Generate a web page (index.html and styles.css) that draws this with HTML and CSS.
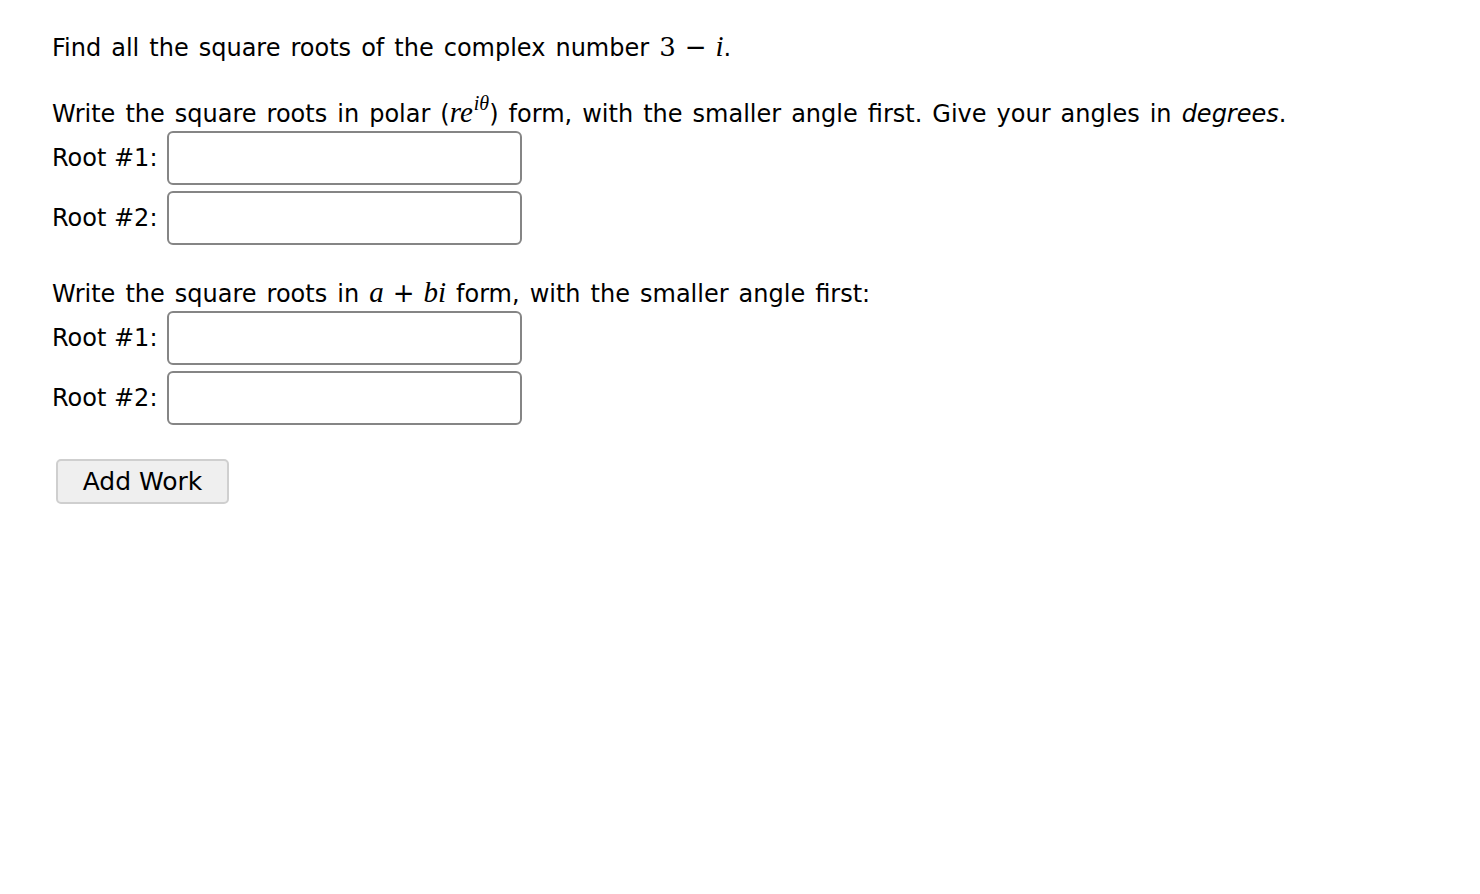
FILE: index.html
```html
<!DOCTYPE html>
<html>
<head>
<meta charset="utf-8">
<link rel="stylesheet" href="styles.css">
</head>
<body>
<div class="page">
  <p class="q">Find all the square roots of the complex number <span class="m"><span class="mn">3</span><span class="mo">−</span><span class="mi">i</span></span>.</p>
  <p class="q q2">Write the square roots in polar (<span class="m"><span class="mi">re</span><sup class="mi sup">iθ</sup></span>) form, with the smaller angle first. Give your angles in <em>degrees</em>.</p>
  <div class="rows">
    <label class="row"><span class="lbl">Root #1:</span><input class="box" type="text"></label>
    <label class="row"><span class="lbl">Root #2:</span><input class="box" type="text"></label>
  </div>
  <p class="q q3">Write the square roots in <span class="m"><span class="mi">a</span><span class="mo">+</span><span class="mi">bi</span></span> form, with the smaller angle first:</p>
  <div class="rows">
    <label class="row"><span class="lbl">Root #1:</span><input class="box" type="text"></label>
    <label class="row"><span class="lbl">Root #2:</span><input class="box" type="text"></label>
  </div>
  <button class="btn" type="button">Add Work</button>
</div>
</body>
</html>
```
FILE: styles.css
```css
html, body {
  margin: 0;
  background: #fff;
}
body {
  font-family: "DejaVu Sans", "Noto Sans", sans-serif;
  font-size: 24px;
  color: #000;
}
.page {
  padding: 31px 0 0 52px;
}
.q {
  margin: 0;
  line-height: 34px;
  word-spacing: 2.4px;
}
.q2 {
  margin-top: 32px;
}
.q3 {
  margin-top: 32px;
}
.m {
  font-family: "Liberation Serif", "DejaVu Serif", serif;
  font-size: 29px;
  line-height: 0;
  word-spacing: 0;
}
.mi {
  font-style: italic;
}
.mn {
  font-family: "DejaVu Serif", "Liberation Serif", serif;
  font-size: 26px;
}
.mo {
  font-family: "DejaVu Sans", sans-serif;
  font-size: 26px;
  margin: 0 9px;
}
.sup {
  font-size: 20px;
  vertical-align: 12px;
  line-height: 0;
  margin-left: 1px;
}
.rows {
  display: flex;
  flex-direction: column;
  gap: 6px;
}
.row {
  display: flex;
  align-items: center;
  gap: 10px;
}
.lbl {
  display: inline-block;
  word-spacing: 0;
}
.box {
  width: 355px;
  height: 54px;
  box-sizing: border-box;
  border: 2px solid #858585;
  border-radius: 6px;
  background: #fff;
  margin: 0;
  padding: 0 8px;
  font: inherit;
}
.btn {
  margin: 34px 0 0 4px;
  width: 173px;
  height: 45px;
  box-sizing: border-box;
  border: 2px solid #cfcfcf;
  border-radius: 5px;
  background: #efefef;
  font-family: inherit;
  font-size: 25px;
  color: #000;
  padding: 0;
}
```
